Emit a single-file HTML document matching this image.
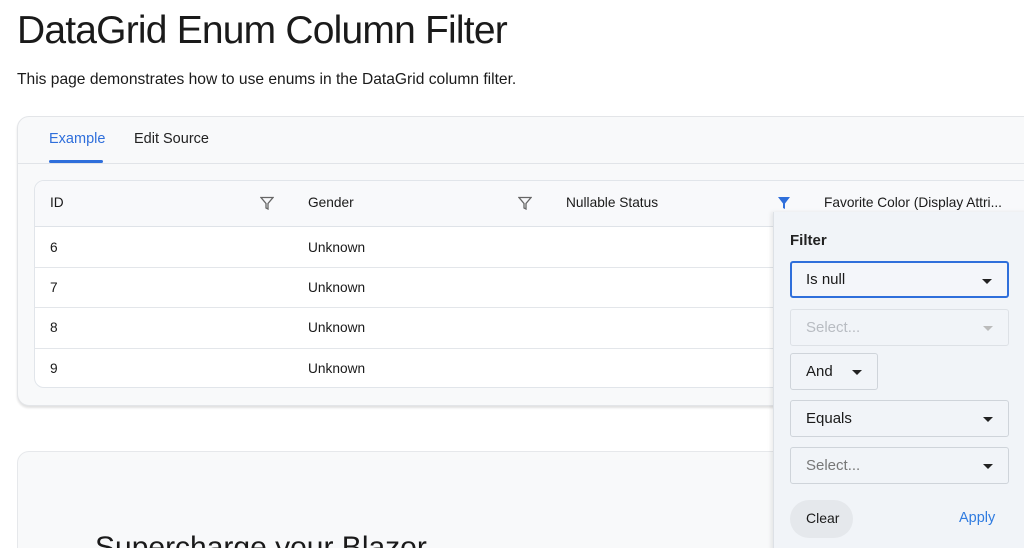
<!DOCTYPE html>
<html><head><style>
*{box-sizing:border-box;margin:0;padding:0}
html,body{width:1024px;height:548px;overflow:hidden}
body{background:#fff;font-family:"Liberation Sans",sans-serif;color:#1a1a1a;position:relative}
.a{position:absolute}
h1{position:absolute;left:17px;top:9px;font-size:39px;font-weight:400;letter-spacing:-0.8px}
.sub{left:17px;top:71px;font-size:15.6px}
.card{left:17px;top:116px;width:1030px;height:290px;background:#f8f9fa;border:1px solid #e3e5e8;border-radius:12px;box-shadow:0 2px 2px rgba(0,0,0,.12)}
.grid{left:34px;top:180px;width:1000px;height:208px;border:1px solid #e1e5ea;border-radius:10px;background:#fff;overflow:hidden}
.hdr{height:46px;background:#f8f9fb;border-bottom:1px solid #dfe3e8}
.row{height:40.5px;border-bottom:1px solid #e3e6ea}
.t{font-size:13.7px;position:absolute}
.pop{left:773px;top:212px;width:260px;height:340px;background:#f1f4f8;border-left:1px solid #dde1e6;box-shadow:-2px 0 4px rgba(0,0,0,.08)}
.sel{position:absolute;left:16px;width:219px;height:37px;border:1px solid #cfd4da;border-radius:3px;font-size:15px;padding:9px 0 0 15px}
.sel:after{content:"";position:absolute;right:15px;top:16px;border:5px solid transparent;border-top:5px solid #222;border-bottom:0}
.dis:after{border-top-color:#bbb}
</style></head><body>
<h1>DataGrid Enum Column Filter</h1>
<div class="a sub">This page demonstrates how to use enums in the DataGrid column filter.</div>
<div class="a card">
 <div class="a" style="left:31px;top:14px;font-size:14.5px;color:#2f6fdb">Example</div>
 <div class="a" style="left:116px;top:14px;font-size:14.5px;color:#222">Edit Source</div>
 <div class="a" style="left:0;top:46px;width:100%;height:1px;background:#e1e4e8"></div>
 <div class="a" style="left:31px;top:43px;width:54px;height:3px;background:#2f6fdb;border-radius:2px"></div>
</div>
<div class="a grid">
 <div class="hdr"></div>
 <div class="row"></div><div class="row"></div><div class="row"></div><div class="row" style="border:0"></div>
</div>
<div class="t" style="left:50px;top:195px">ID</div>
<div class="t" style="left:308px;top:195px">Gender</div>
<div class="t" style="left:566px;top:195px">Nullable Status</div>
<div class="t" style="left:824px;top:195px">Favorite Color (Display Attri...</div>
<svg class="a" style="left:260px;top:196px" width="14" height="14" viewBox="0 0 14 14"><path d="M1 1.5h12L8 7.5V13L6 12V7.5z" fill="none" stroke="#666" stroke-width="1.3"/></svg>
<svg class="a" style="left:518px;top:196px" width="14" height="14" viewBox="0 0 14 14"><path d="M1 1.5h12L8 7.5V13L6 12V7.5z" fill="none" stroke="#666" stroke-width="1.3"/></svg>
<svg class="a" style="left:777px;top:196px" width="14" height="14" viewBox="0 0 14 14"><path d="M1 1h12L8 7.5V13L6 12V7.5z" fill="#2f6fdb"/></svg>
<div class="t" style="left:50px;top:240px">6</div><div class="t" style="left:308px;top:240px">Unknown</div>
<div class="t" style="left:50px;top:280px">7</div><div class="t" style="left:308px;top:280px">Unknown</div>
<div class="t" style="left:50px;top:320px">8</div><div class="t" style="left:308px;top:320px">Unknown</div>
<div class="t" style="left:50px;top:361px">9</div><div class="t" style="left:308px;top:361px">Unknown</div>
<div class="a" style="left:17px;top:451px;width:1030px;height:120px;background:#f8f9fa;border:1px solid #e6e8eb;border-radius:12px"></div>
<div class="a" style="left:95px;top:531px;font-size:30px">Supercharge your Blazor</div>
<div class="a pop">
 <div class="a" style="left:16px;top:20px;font-size:15px;font-weight:bold;color:#222">Filter</div>
 <div class="sel" style="top:49px;border:2px solid #2f6fdb;background:#f4f6fa;padding:8px 0 0 14px">Is null</div>
 <div class="sel dis" style="top:97px;color:#b8bcc2;border-color:#dde1e6">Select...</div>
 <div class="sel" style="top:141px;width:88px">And</div>
 <div class="sel" style="top:188px">Equals</div>
 <div class="sel" style="top:235px;color:#777">Select...</div>
 <div class="a" style="left:16px;top:288px;width:63px;height:38px;border-radius:19px;background:#e5e8ec;font-size:14px;padding:10px 0 0 16px">Clear</div>
 <div class="a" style="left:185px;top:298px;font-size:14.5px;color:#2f7be0">Apply</div>
</div>
</body></html>
